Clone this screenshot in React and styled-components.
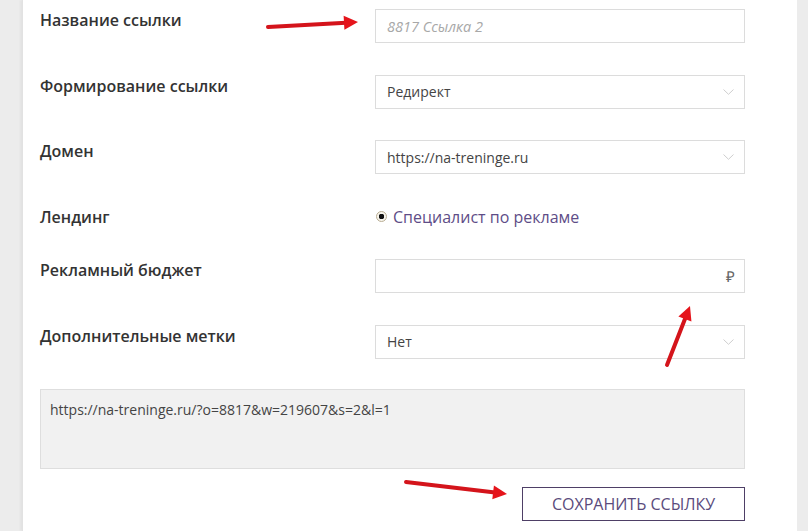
import React from "react";
import styled, { createGlobalStyle } from "styled-components";

const GlobalStyle = createGlobalStyle`
  html, body {
    margin: 0;
    padding: 0;
    background: #ececec;
    font-family: "Open Sans", "Liberation Sans", sans-serif;
  }
`;

const Page = styled.div`
  position: relative;
  width: 808px;
  height: 531px;
  overflow: hidden;
  display: flex;
  background: #ececec;
`;

const Card = styled.div`
  margin-left: 22px;
  width: 775px;
  height: 531px;
  box-sizing: border-box;
  background: #fff;
  border-left: 1px solid #e2e2e2;
  box-shadow: -2px 0 2px rgba(0, 0, 0, 0.04);
  padding: 9px 52px 0 17px;
  display: flex;
  flex-direction: column;
  gap: 31.5px;
`;

const Row = styled.div`
  display: grid;
  grid-template-columns: 335px 370px;
  align-items: start;
  height: ${(p) => (p.$short ? "22px" : "34px")};
`;

const Label = styled.div`
  font-size: 16px;
  font-weight: 600;
  line-height: 20px;
  padding-top: 1px;
  color: #333;
`;

const Field = styled.div`
  height: 34px;
  box-sizing: border-box;
  border: 1px solid #dcdcdc;
  background: #fff;
  display: flex;
  align-items: center;
  justify-content: space-between;
  padding: 0 10px 0 11px;
  font-size: ${(p) => (p.$placeholder ? "14.5px" : "14px")};
  color: ${(p) => (p.$placeholder ? "#a8a8a8" : "#444")};
  font-style: ${(p) => (p.$placeholder ? "italic" : "normal")};
`;

const Chevron = styled.svg`
  width: 11px;
  height: 6px;
`;

const Ruble = styled.span`
  margin-left: auto;
  margin-right: -1px;
  color: #666;
  font-size: 15px;
  font-weight: 300;
`;

const RadioLine = styled.label`
  display: flex;
  align-items: center;
  gap: 6px;
  height: 22px;
  padding-left: 1px;
  font-size: 16px;
  color: #5e4d87;
`;

const RadioDot = styled.span`
  width: 11px;
  height: 11px;
  box-sizing: border-box;
  border-radius: 50%;
  border: 1px solid #b9ad93;
  background: radial-gradient(circle, #111 0 2.6px, #f7f4ec 3px 100%);
`;

const Result = styled.div`
  margin-top: -1.5px;
  height: 80px;
  box-sizing: border-box;
  background: #f1f1f1;
  border: 1px solid #dedede;
  padding: 10px 9px;
  font-size: 14px;
  font-stretch: 96%;
  color: #444;
`;

const Actions = styled.div`
  display: flex;
  justify-content: flex-end;
  margin-top: -13.5px;
`;

const SaveButton = styled.button`
  width: 223px;
  height: 34px;
  border: 1px solid #4e3f66;
  background: #fff;
  color: #5a4b7c;
  font-family: "Open Sans", "Liberation Sans", sans-serif;
  font-size: 16px;
  font-stretch: 92%;
  padding: 0;
`;

const Overlay = styled.svg`
  position: absolute;
  left: 0;
  top: 0;
  width: 808px;
  height: 531px;
  pointer-events: none;
`;

const Arrow = ({ from, to }) => {
  const dx = to[0] - from[0];
  const dy = to[1] - from[1];
  const len = Math.hypot(dx, dy);
  const ux = dx / len;
  const uy = dy / len;
  const bx = to[0] - ux * 14;
  const by = to[1] - uy * 14;
  const px = -uy * 7;
  const py = ux * 7;
  return (
    <g>
      <line
        x1={from[0]}
        y1={from[1]}
        x2={bx + ux * 2}
        y2={by + uy * 2}
        stroke="#d4141b"
        strokeWidth="4"
        strokeLinecap="round"
      />
      <polygon
        points={`${to[0]},${to[1]} ${bx + px},${by + py} ${bx - px},${by - py}`}
        fill="#e5141b"
      />
    </g>
  );
};

const SelectArrow = () => (
  <Chevron viewBox="0 0 11 6">
    <polyline points="0.5,0.5 5.5,5.3 10.5,0.5" fill="none" stroke="#cfcfcf" strokeWidth="1" />
  </Chevron>
);

const rows = [
  { label: "Название ссылки", value: "8817 Ссылка 2", placeholder: true },
  { label: "Формирование ссылки", value: "Редирект", select: true },
  { label: "Домен", value: "https://na-treninge.ru", select: true },
];

const App = () => {
  return (
    <Page>
      <GlobalStyle />
      <Card>
        {rows.map((r) => (
          <Row key={r.label}>
            <Label>{r.label}</Label>
            <Field $placeholder={r.placeholder}>
              <span>{r.value}</span>
              {r.select && <SelectArrow />}
            </Field>
          </Row>
        ))}
        <Row $short>
          <Label>Лендинг</Label>
          <RadioLine>
            <RadioDot />
            Специалист по рекламе
          </RadioLine>
        </Row>
        <Row>
          <Label>Рекламный бюджет</Label>
          <Field>
            <Ruble>₽</Ruble>
          </Field>
        </Row>
        <Row>
          <Label>Дополнительные метки</Label>
          <Field>
            <span>Нет</span>
            <SelectArrow />
          </Field>
        </Row>
        <Result>https://na-treninge.ru/?o=8817&amp;w=219607&amp;s=2&amp;l=1</Result>
        <Actions>
          <SaveButton>СОХРАНИТЬ ССЫЛКУ</SaveButton>
        </Actions>
      </Card>
      <Overlay viewBox="0 0 808 531">
        <Arrow from={[268, 27]} to={[358, 22]} />
        <Arrow from={[667, 365]} to={[690, 306]} />
        <Arrow from={[406, 482]} to={[507, 494]} />
      </Overlay>
    </Page>
  );
};

export default App;
